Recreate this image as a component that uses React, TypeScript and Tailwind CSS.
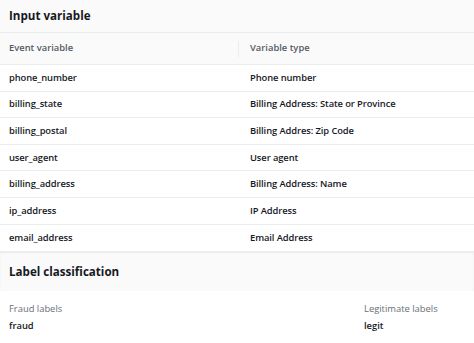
import React from "react";

const rows: [string, string][] = [
  ["phone_number", "Phone number"],
  ["billing_state", "Billing Address: State or Province"],
  ["billing_postal", "Billing Addres: Zip Code"],
  ["user_agent", "User agent"],
  ["billing_address", "Billing Address: Name"],
  ["ip_address", "IP Address"],
  ["email_address", "Email Address"],
];

export default function App() {
  return (
    <div
      className="w-[474px] h-[343px] bg-white text-[#16191f] overflow-hidden"
      style={{ fontFamily: '"Open Sans", "Noto Sans", sans-serif' }}
    >
      <div className="h-[33px] bg-[#fafafa] flex items-center px-[9px] border-b border-[#eaeded]">
        <span className="text-[11.6px] font-bold">Input variable</span>
      </div>
      <div className="h-[32px] bg-[#fafafa] flex items-center border-b border-[#eaeded] text-[9.4px] font-semibold text-[#545b64]">
        <div className="w-[238px] pl-[9px] flex items-center h-full">Event variable</div>
        <div className="w-px h-[16px] bg-[#eaeded]" />
        <div className="flex-1 pl-[11px]">Variable type</div>
      </div>
      {rows.map(([a, b], i) => (
        <div
          key={a}
          className={`h-[26.6px] flex items-center text-[9.4px] font-semibold tracking-[-0.1px] ${
            i < rows.length - 1 ? "border-b border-[#eaeded]" : ""
          }`}
        >
          <div className="w-[239px] pl-[9px]">{a}</div>
          <div className="flex-1 pl-[11px]">{b}</div>
        </div>
      ))}
      <div className="h-[40px] bg-[#fafafa] flex items-center px-[9px] border-t border-[#eaeded] shadow-[inset_0_1px_2px_rgba(0,0,0,0.06)]">
        <span className="text-[11.6px] font-bold">Label classification</span>
      </div>
      <div className="flex pt-[9px] text-[9.4px]">
        <div className="w-[364px] pl-[9px]">
          <div className="text-[#687078] h-[17px] leading-[17px]">Fraud labels</div>
          <div className="font-semibold h-[17px] leading-[17px]">fraud</div>
        </div>
        <div className="flex-1">
          <div className="text-[#687078] h-[17px] leading-[17px]">Legitimate labels</div>
          <div className="font-semibold h-[17px] leading-[17px]">legit</div>
        </div>
      </div>
    </div>
  );
}
